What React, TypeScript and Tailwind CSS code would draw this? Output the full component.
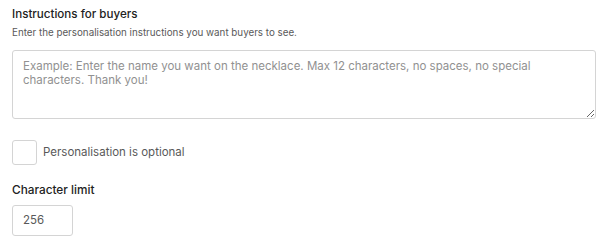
import React from "react";

export default function App() {
  return (
    <div className="w-[600px] h-[246px] bg-white px-[12px] pt-[7px] text-[#222222]" style={{ fontFamily: "Inter, 'Liberation Sans', sans-serif" }}>
      <div className="text-[11.6px] font-medium leading-[14px] text-[#222222]">Instructions for buyers</div>
      <div className="mt-[6px] text-[9.8px] leading-[12px] text-[#595959]">Enter the personalisation instructions you want buyers to see.</div>
      <textarea
        className="mt-[11px] block w-[584px] h-[69px] rounded-[3px] border border-[#d4d4d4] px-[10px] pt-[8px] pb-[6px] text-[11.5px] leading-[14px] text-[#222] placeholder:text-[#919191] outline-none resize-y"
        placeholder="Example: Enter the name you want on the necklace. Max 12 characters, no spaces, no special characters. Thank you!"
      />
      <label className="mt-[21px] flex items-center gap-[6px]">
        <span className="block w-[25px] h-[25px] rounded-[3px] border border-[#d4d4d4] bg-white" />
        <span className="text-[11.5px] text-[#595959]">Personalisation is optional</span>
      </label>
      <div className="mt-[18px] text-[11.8px] font-medium leading-[14px] text-[#222222]">Character limit</div>
      <div className="mt-[8px] flex w-[61px] h-[31px] items-center rounded-[3px] border border-[#d4d4d4] px-[10px] text-[11.5px] text-[#595959]">256</div>
    </div>
  );
}
